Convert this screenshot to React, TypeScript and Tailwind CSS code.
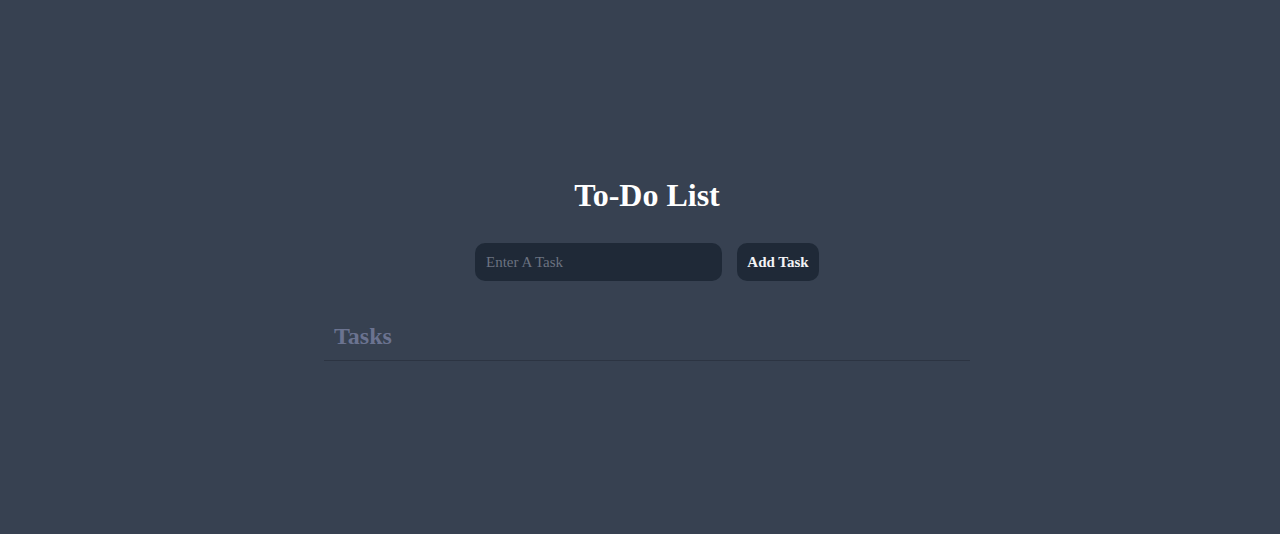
export default function App() {
  return (
    <main className="min-h-screen bg-[#374151] pl-[14px] pt-[177px] font-['Liberation_Serif',serif]">
      <div className="mx-auto w-[646px]">
        <h1 className="text-center text-[32px] leading-[36px] font-bold text-white">To-Do List</h1>

        <form className="mt-[30px] flex justify-center gap-[15px]" onSubmit={(e) => e.preventDefault()}>
          <input
            type="text"
            placeholder="Enter A Task"
            className="h-[38px] w-[247px] rounded-[10px] bg-[#1f2937] px-[11px] text-[15px] text-white outline-none placeholder:text-[#6b7280]"
          />
          <button
            type="submit"
            className="h-[38px] w-[82px] rounded-[10px] bg-[#1f2937] text-[15px] font-bold text-[#f3f4f6]"
          >
            Add Task
          </button>
        </form>

        <h2 className="mt-[41px] border-b border-[#2c3442] px-[10px] pb-[10px] text-[24px] leading-[28px] font-bold text-[#6b7390]">
          Tasks
        </h2>
      </div>
    </main>
  );
}
